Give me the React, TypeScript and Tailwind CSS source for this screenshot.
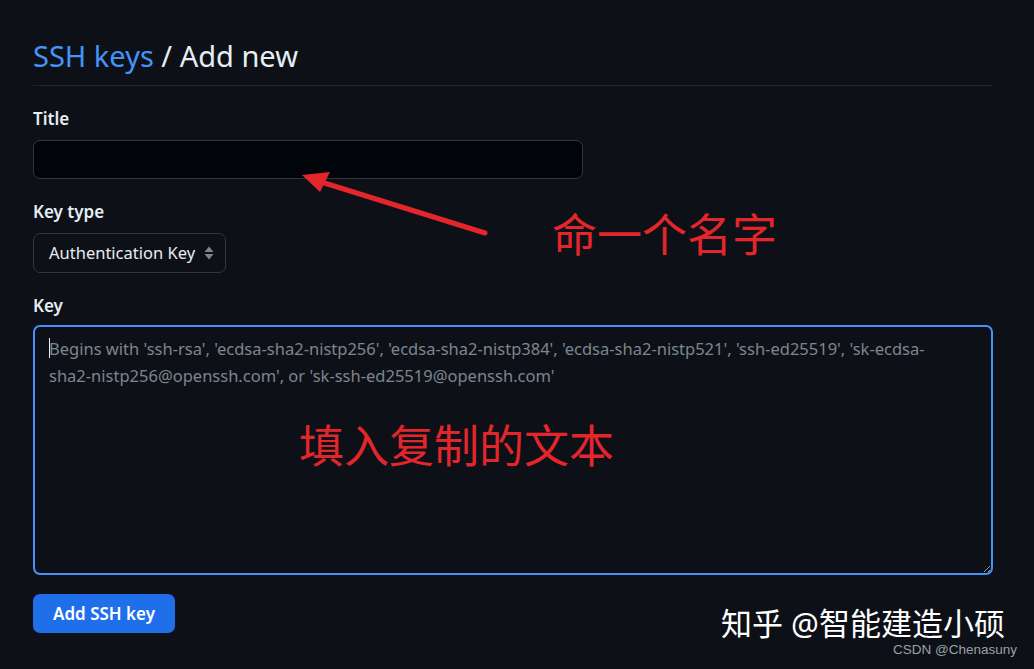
import React from 'react';

const FONT = '"Noto Sans", "Noto Sans CJK SC", sans-serif';

export default function App() {
  return (
    <div className="relative min-h-[669px] w-full overflow-hidden bg-[#0d1117] text-[#e6edf3]" style={{ fontFamily: FONT }}>
      <div className="px-[33px] pt-[37px] pr-[41px]">
        {/* Header */}
        <div className="border-b border-[#21262d] pb-[10px]">
          <h1 className="text-[29px] leading-[38px] font-normal">
            <a className="text-[#4493f8]">SSH keys</a>
            <span className="text-[#e6edf3]"> / Add new</span>
          </h1>
        </div>

        <form className="mt-[22px] flex flex-col items-start">
          <label className="block text-[17px] leading-[22px] font-semibold">Title</label>
          <input className="mt-[10px] block h-[39px] w-[550px] rounded-[7px] border border-[#30363d] bg-[#010409] px-3 outline-none" />

          <label className="mt-[22px] block text-[17px] leading-[22px] font-semibold">Key type</label>
          <div className="mt-[10px] flex h-[40px] w-[193px] items-center justify-between rounded-[7px] border border-[#30363d] bg-[#0d1117] pl-[15px] pr-[10px]">
            <span className="text-[16.5px] text-[#e6edf3]">Authentication Key</span>
            <svg width="12" height="18" viewBox="0 0 12 18" fill="#7d8590">
              <path d="M6 2.5 L10.5 8 H1.5 Z" />
              <path d="M6 15.5 L10.5 10 H1.5 Z" />
            </svg>
          </div>

          <label className="mt-[22px] block text-[17px] leading-[22px] font-semibold">Key</label>
          <div className="relative mt-[8px] w-full">
            <textarea
              className="block h-[250px] w-full rounded-[7px] border-2 border-[#4493f8] bg-[#0d1117] pl-[14px] pr-[40px] pt-[8px] pb-[11px] text-[16.5px] leading-[27px] text-[#e6edf3] outline-none placeholder:text-[#7d8590]"
              placeholder="Begins with 'ssh-rsa', 'ecdsa-sha2-nistp256', 'ecdsa-sha2-nistp384', 'ecdsa-sha2-nistp521', 'ssh-ed25519', 'sk-ecdsa-sha2-nistp256@openssh.com', or 'sk-ssh-ed25519@openssh.com'"
              style={{ fontFamily: FONT }}
            />
            <span className="absolute left-[16px] top-[13px] h-[20px] w-px bg-[#e6edf3]" />
          </div>

          <button
            type="button"
            className="mt-[19px] h-[39px] rounded-[7px] bg-[#1f6feb] px-[20px] text-[17px] font-semibold text-white"
          >
            Add SSH key
          </button>
        </form>
      </div>

      {/* Annotations */}
      <svg className="absolute left-0 top-0" width="1034" height="669" viewBox="0 0 1034 669">
        <line x1="485" y1="233" x2="318" y2="181" stroke="#e3262b" strokeWidth="5" strokeLinecap="round" />
        <path d="M302 175 L330 172 L320 192 Z" fill="#e3262b" />
      </svg>
      <div className="absolute left-[552px] top-[207px] text-[45px] leading-[56px] text-[#e3262b]">命一个名字</div>
      <div className="absolute left-[299px] top-[418px] text-[45px] leading-[56px] text-[#e3262b]">填入复制的文本</div>

      {/* Watermarks */}
      <div className="absolute right-[17px] bottom-[12px] flex flex-col items-end">
        <div className="mr-[12px] text-[31px] leading-[34px] text-white">知乎 @智能建造小硕</div>
        <div className="mt-[2px] text-[13.5px] leading-[15px] text-[#9aa0a6]" style={{ fontFamily: '"Liberation Sans", sans-serif' }}>CSDN @Chenasuny</div>
      </div>
    </div>
  );
}
